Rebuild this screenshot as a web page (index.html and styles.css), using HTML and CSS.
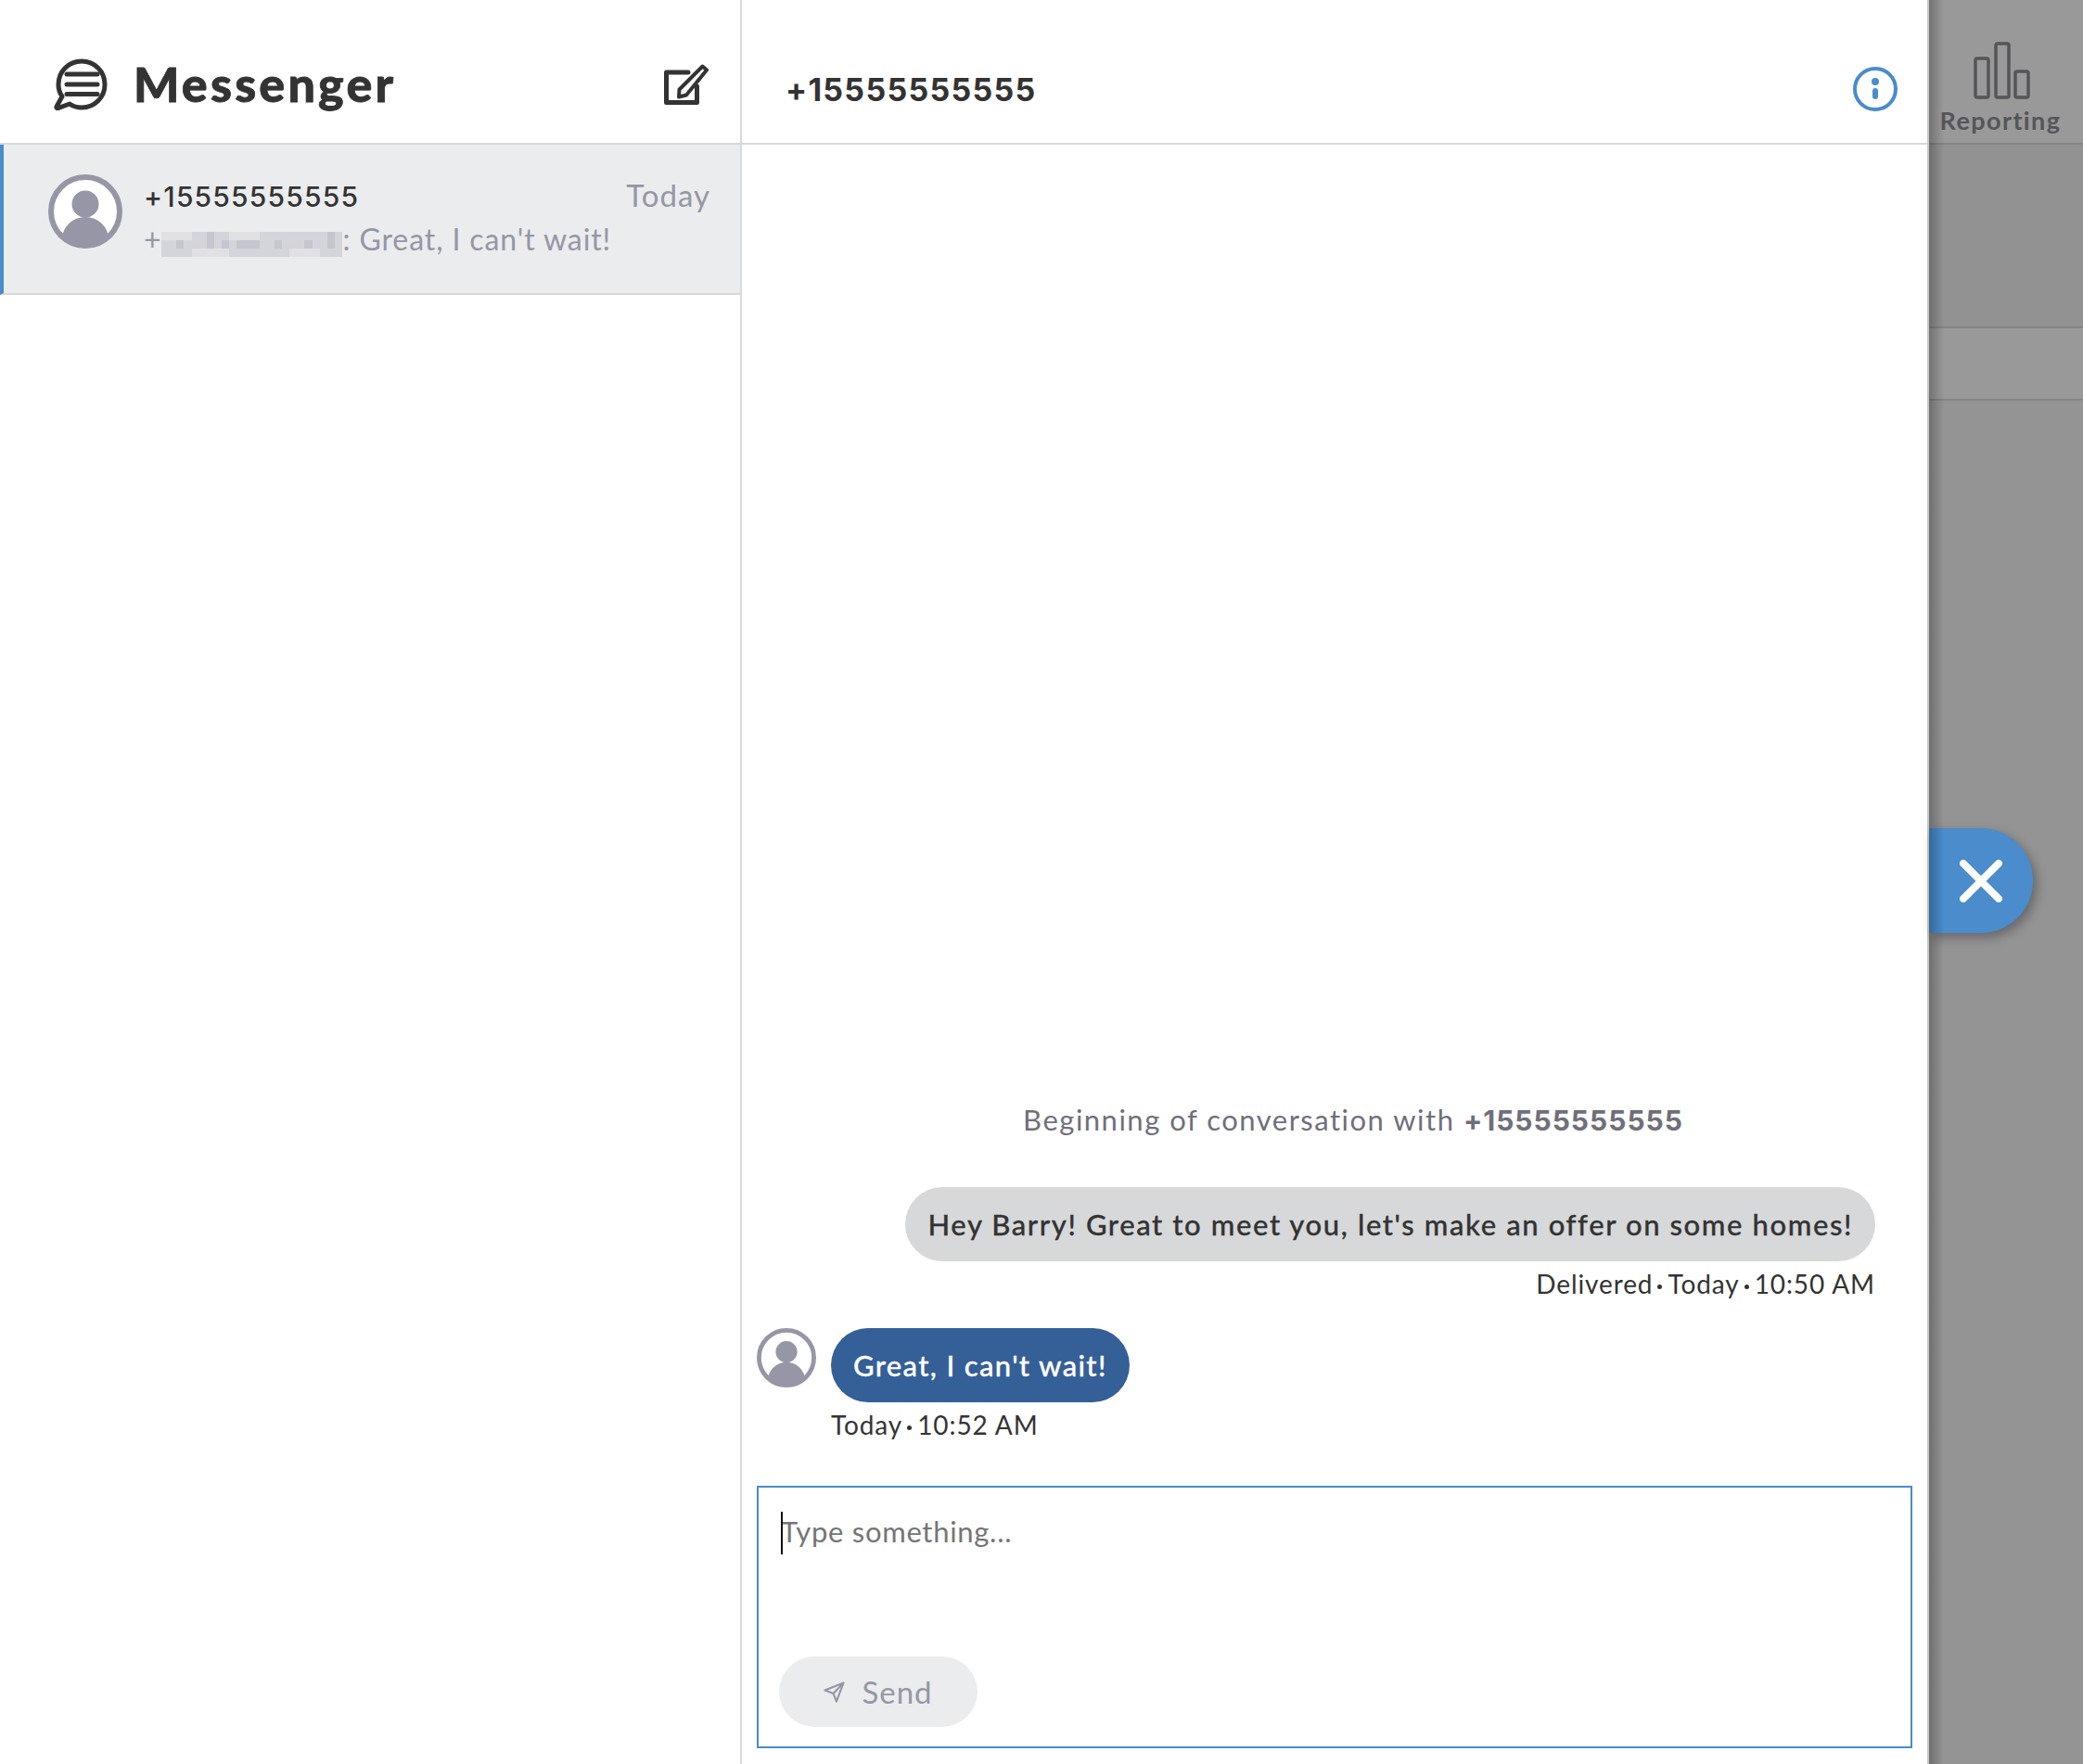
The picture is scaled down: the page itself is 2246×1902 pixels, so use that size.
FILE: index.html
```html
<!DOCTYPE html>
<html lang="en">
<head>
    <meta charset="UTF-8">
    <title>Messenger</title>
    <link rel="stylesheet" href="styles.css">
</head>
<body>
    <div class="app">
        <!-- Conversation list -->
        <div class="list-panel">
            <header class="list-header">
                <svg class="logo-icon" viewBox="0 0 58 56" width="58" height="56">
                    <path class="icon-line" d="M30 3C16 3 5 14 5 28c0 5 1.500 9.500 4 13L3 52c-.5 1.500.5 2 2 1.500L17 49c4 2.800 8.500 4 13 4 14 0 25-11 25-25S44 3 30 3z"/>
                    <path class="icon-line" d="M14 17h33M14 28h33M14 38.500h33"/>
                </svg>
                <h1 class="list-title">Messenger</h1>
                <svg class="compose-icon" viewBox="0 0 48 44" width="48" height="44">
                    <path class="icon-line" d="M26 9H2.500v32.500H35.500V24"/>
                    <path class="icon-line thin" d="M41.500 2.500L46 6.500 24 33.500l-8 2 .5-8z"/>
                </svg>
            </header>
            <div class="thread">
                <svg class="avatar avatar-large" viewBox="0 0 80 80">
                    <use href="#avatar-shape"/>
                </svg>
                <div class="thread-text">
                    <div class="thread-top">
                        <span class="thread-name">+15555555555</span>
                        <span class="thread-date">Today</span>
                    </div>
                    <div class="thread-preview">+<svg class="pixels" viewBox="0 0 24 3" width="195" height="27" preserveAspectRatio="none" shape-rendering="crispEdges">
                        <path fill="#e0e0e5" d="M0 0h24v3H0z"/>
                        <path fill="#d4d4db" d="M0 1h4v2H0zM4 0h5v2H4zM9 1h4v2H9zM13 0h4v3h-4zM17 0h4v2h-4zM21 0h3v3h-3z"/>
                        <path fill="#c6c6d0" d="M2 1h1v1H2zM6 0h1v2H6zM8 1h1v1H8zM10 1h2v1h-2zM15 1h1v1h-1zM19 1h1v1h-1zM22 0h1v2h-1zM12 1h1v1h-1z"/>
                    </svg>: Great, I can't wait!</div>
                </div>
            </div>
        </div>

        <!-- Open conversation -->
        <div class="chat-panel">
            <header class="chat-header">
                <span class="chat-name">+15555555555</span>
                <svg class="info-icon" viewBox="0 0 48 48" width="48" height="48">
                    <circle cx="24" cy="24" r="22" fill="none" stroke="#4a8ccc" stroke-width="4"/>
                    <circle cx="24" cy="16" r="4" fill="#4a8ccc"/>
                    <rect x="21" y="23" width="6" height="12" rx="3" fill="#4a8ccc"/>
                </svg>
            </header>
            <div class="messages">
                <div class="convo-start">Beginning of conversation with <b>+15555555555</b></div>
                <div class="sent">
                    <div class="bubble bubble-sent">Hey Barry! Great to meet you, let's make an offer on some homes!</div>
                    <div class="meta">Delivered<span class="dot"></span>Today<span class="dot"></span>10:50 AM</div>
                </div>
                <div class="received">
                    <svg class="avatar avatar-small" viewBox="0 0 80 80">
                        <use href="#avatar-shape"/>
                    </svg>
                    <div>
                        <div class="bubble bubble-received">Great, I can't wait!</div>
                        <div class="meta">Today<span class="dot"></span>10:52 AM</div>
                    </div>
                </div>
            </div>
            <div class="composer">
                <div class="composer-input"><span class="caret"></span>Type something...</div>
                <button class="send-button">
                    <svg viewBox="0 0 24 24" width="23" height="23">
                        <path d="M22.500 1.500L1.500 10l9.500 3.500 3.500 9zM22.500 1.500L11 13.500" fill="none" stroke="#9696a6" stroke-width="2.200" stroke-linejoin="round"/>
                    </svg>
                    Send
                </button>
            </div>
        </div>

        <!-- Dimmed nav behind the panel -->
        <div class="side-nav">
            <div class="nav-item">
                <svg viewBox="0 0 62 62" width="62" height="62">
                    <rect x="2" y="18" width="14" height="42" rx="2" class="bar"/>
                    <rect x="24" y="2" width="14" height="58" rx="2" class="bar"/>
                    <rect x="45" y="32" width="14" height="28" rx="2" class="bar"/>
                </svg>
                <span>Reporting</span>
            </div>
            <div class="nav-gap"></div>
            <div class="nav-row"></div>
            <button class="close-button">
                <svg viewBox="0 0 46 46" width="46" height="46">
                    <path d="M4 4l38 38M42 4L4 42" stroke="#fff" stroke-width="8" stroke-linecap="round"/>
                </svg>
            </button>
        </div>
    </div>

    <!-- Shared avatar drawing -->
    <svg class="defs" width="0" height="0">
        <defs>
            <clipPath id="avatar-clip"><circle cx="40" cy="40" r="38"/></clipPath>
            <g id="avatar-shape">
                <circle cx="40" cy="40" r="37" fill="#fff" stroke="#9696a6" stroke-width="6"/>
                <circle cx="40" cy="32" r="14.500" fill="#9696a6"/>
                <ellipse cx="40" cy="70" rx="25" ry="24" fill="#9696a6" clip-path="url(#avatar-clip)"/>
            </g>
        </defs>
    </svg>
</body>
</html>
```

FILE: styles.css
```css
* {
    box-sizing: border-box;
}

body {
    margin: 0;
    padding: 0;
    font-family: Lato, "Open Sans", sans-serif;
    background: #fff;
    color: #333;
}

.app {
    display: flex;
    height: 1902px;
    overflow: hidden;
}

.icon-line {
    fill: none;
    stroke: #333;
    stroke-width: 5;
    stroke-linecap: round;
    stroke-linejoin: round;
}

.icon-line.thin {
    stroke-width: 4;
}

.defs {
    position: absolute;
}

/* Conversation list */
.list-panel {
    width: 800px;
    flex: none;
    border-right: 2px solid #d9d9d9;
}

.list-header {
    display: flex;
    align-items: center;
    height: 156px;
    padding: 26px 34px 0 58px;
    border-bottom: 2px solid #d7d8da;
}

.logo-icon {
    margin: 1px 28px 0 0;
}

.list-title {
    flex: 1;
    margin: 0;
    font-size: 52px;
    font-weight: 900;
    letter-spacing: 3.2px;
    -webkit-text-stroke: .8px #333;
    color: #333;
}

.compose-icon {
    margin-top: 2px;
}

.thread {
    display: flex;
    height: 162px;
    padding: 32px 32px 0 48px;
    background: #ebecee;
    border-left: 4px solid #4a8ccc;
    border-bottom: 2px solid #d7d8da;
}

.avatar {
    display: block;
    flex: none;
}

.avatar-large {
    width: 80px;
    height: 80px;
    margin-right: 23px;
}

.avatar-small {
    width: 64px;
    height: 64px;
    margin-right: 16px;
}

.thread-text {
    flex: 1;
    min-width: 0;
}

.thread-top {
    display: flex;
    justify-content: space-between;
    align-items: baseline;
    font-size: 33px;
    line-height: 44px;
    letter-spacing: 1px;
}

.thread-name {
    font-family: Inter, sans-serif;
    font-size: 30px;
    font-weight: 500;
    letter-spacing: 1.2px;
}

.thread-date {
    color: #9696a6;
}

.thread-preview {
    margin-top: 2px;
    font-size: 32px;
    line-height: 44px;
    letter-spacing: .9px;
    color: #9696a6;
    white-space: nowrap;
}

.pixels {
    vertical-align: -7px;
    margin-left: 0;
}

/* Open conversation */
.chat-panel {
    display: flex;
    flex-direction: column;
    width: 1280px;
    flex: none;
    border-right: 2px solid #c8c8c8;
}

.chat-header {
    display: flex;
    justify-content: space-between;
    align-items: center;
    height: 156px;
    padding: 38px 32px 0 47px;
    border-bottom: 2px solid #d9d9d9;
}

.chat-name {
    font-family: Inter, sans-serif;
    font-size: 34px;
    font-weight: 700;
    letter-spacing: 1.3px;
}

.messages {
    flex: 1;
    display: flex;
    flex-direction: column;
    justify-content: flex-end;
    padding: 0 56px 46px 16px;
}

.convo-start {
    margin: 0 0 50px 0;
    padding-left: 80px;
    text-align: center;
    font-size: 31px;
    line-height: 44px;
    letter-spacing: 1.5px;
    color: #6f6f7b;
}

.convo-start b {
    font-family: Inter, sans-serif;
    font-size: 30px;
    letter-spacing: 1px;
}

.sent {
    display: flex;
    flex-direction: column;
    align-items: flex-end;
}

.received {
    display: flex;
    margin-top: 28px;
}

.bubble {
    height: 80px;
    padding: 0 24px;
    border-radius: 40px;
    font-size: 31px;
    font-weight: 500;
    line-height: 80px;
    white-space: nowrap;
    -webkit-text-stroke: .3px;
}

.bubble-sent {
    background: #d7d8da;
    color: #333;
    letter-spacing: 1.6px;
}

.bubble-received {
    display: inline-block;
    background: #355f97;
    color: #fff;
    letter-spacing: 1.35px;
}

.meta {
    margin-top: 4px;
    font-size: 28px;
    line-height: 40px;
    letter-spacing: .9px;
    color: #333;
}

.dot {
    display: inline-block;
    width: 5px;
    height: 5px;
    margin: 0 6px 0 5px;
    border-radius: 50%;
    background: #333;
    vertical-align: middle;
}

.composer {
    display: flex;
    flex-direction: column;
    justify-content: space-between;
    height: 283px;
    margin: 0 16px 17px 16px;
    padding: 26px 22px 21px 23px;
    border: 2px solid #4a8ccc;
}

.composer-input {
    position: relative;
    padding-left: 1px;
    font-size: 31px;
    line-height: 42px;
    letter-spacing: .7px;
    color: #757575;
}

.caret {
    position: absolute;
    left: 1px;
    top: 0;
    width: 2px;
    height: 46px;
    background: #111;
}

.send-button {
    display: flex;
    align-items: center;
    justify-content: center;
    gap: 18px;
    width: 214px;
    height: 76px;
    margin-left: -1px;
    border: none;
    border-radius: 38px;
    background: #ebecee;
    color: #9696a6;
    font-family: inherit;
    font-size: 33px;
    letter-spacing: 1px;
}

/* Dimmed side nav */
.side-nav {
    position: relative;
    flex: 1;
    display: flex;
    flex-direction: column;
    background: #949494;
}

.side-nav::after {
    content: "";
    position: absolute;
    z-index: 2;
    left: 0;
    top: 0;
    bottom: 0;
    width: 16px;
    background: linear-gradient(to right, rgba(0, 0, 0, .25), rgba(0, 0, 0, 0));
}

.nav-item {
    display: flex;
    flex-direction: column;
    align-items: center;
    height: 156px;
    padding: 45px 12px 0 0;
    background: #999;
    border-bottom: 2px solid #848484;
    color: #555559;
    font-size: 27px;
    font-weight: 700;
    letter-spacing: 1.4px;
    line-height: 34px;
}

.nav-item svg {
    display: block;
    margin: 0 0 6px 3px;
}

.bar {
    fill: none;
    stroke: #555559;
    stroke-width: 3.500;
}

.nav-gap {
    height: 198px;
    background: #929292;
    border-bottom: 2px solid #848484;
}

.nav-row {
    height: 78px;
    background: #999;
    border-bottom: 2px solid #848484;
}

.close-button {
    position: absolute;
    z-index: 1;
    left: 0;
    top: 893px;
    display: flex;
    align-items: center;
    justify-content: center;
    width: 112px;
    height: 113px;
    padding: 0;
    border: none;
    border-radius: 0 56px 56px 0;
    background: #4a8ccc;
    box-shadow: 4px 5px 12px rgba(0, 0, 0, .3);
}
```
